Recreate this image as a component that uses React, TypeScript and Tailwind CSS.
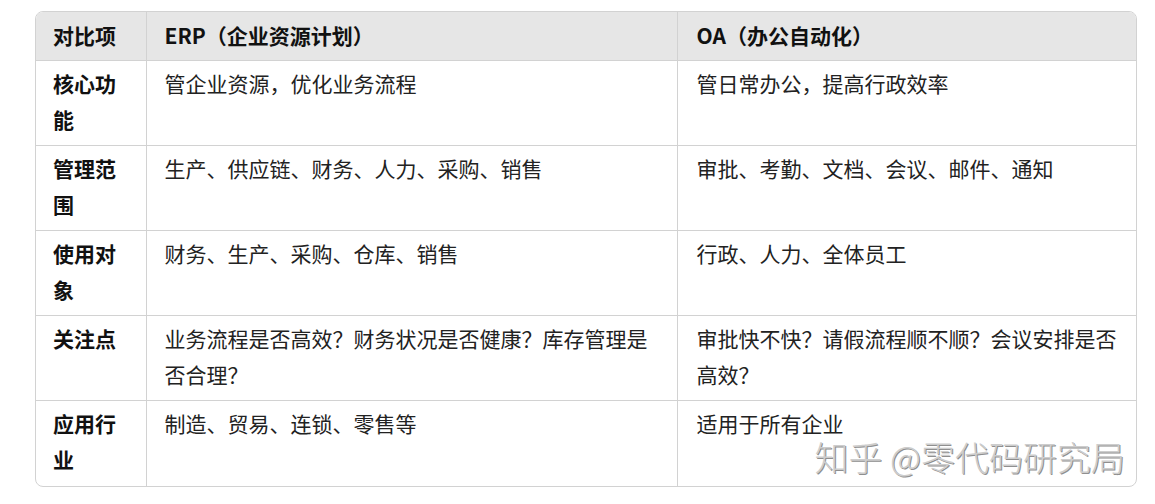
const rows: [string, string, string][] = [
  ["核心功能", "管企业资源，优化业务流程", "管日常办公，提高行政效率"],
  ["管理范围", "生产、供应链、财务、人力、采购、销售", "审批、考勤、文档、会议、邮件、通知"],
  ["使用对象", "财务、生产、采购、仓库、销售", "行政、人力、全体员工"],
  ["关注点", "业务流程是否高效？财务状况是否健康？库存管理是否合理？", "审批快不快？请假流程顺不顺？会议安排是否高效？"],
  ["应用行业", "制造、贸易、连锁、零售等", "适用于所有企业"],
];

export default function App() {
  return (
    <div
      className="min-h-screen bg-white pl-[35px] pt-[11px] text-[21px] leading-[36px] text-[#222]"
      style={{ fontFamily: '"Microsoft YaHei", "Noto Sans CJK SC", "Noto Sans", sans-serif' }}
    >
      <div className="relative w-[1102px] overflow-hidden rounded-[8px] border border-[#d2d2d2]">
        <table className="w-full table-fixed border-collapse">
          <colgroup>
            <col className="w-[110px]" />
            <col className="w-[531px]" />
            <col />
          </colgroup>
          <thead>
            <tr className="h-[48px] bg-[#e6e6e6] text-[#111]">
              <th className="px-[17px] pb-[7px] pt-[5px] text-left font-bold">对比项</th>
              <th className="border-l border-[#d2d2d2] px-[18px] pb-[7px] pt-[5px] text-left font-bold">ERP（企业资源计划）</th>
              <th className="border-l border-[#d2d2d2] pl-[19px] pr-[6px] pb-[7px] pt-[5px] text-left font-bold">OA（办公自动化）</th>
            </tr>
          </thead>
          <tbody>
            {rows.map((r) => (
              <tr key={r[0]} className="h-[85px] border-t border-[#d2d2d2] align-top">
                <td className="px-[17px] pb-[6px] pt-[4px] font-bold text-[#111]">{r[0]}</td>
                <td className="border-l border-[#d2d2d2] px-[18px] pb-[6px] pt-[4px]">{r[1]}</td>
                <td className="border-l border-[#d2d2d2] pl-[19px] pr-[6px] pb-[6px] pt-[4px]">{r[2]}</td>
              </tr>
            ))}
          </tbody>
        </table>
        <div className="pointer-events-none absolute bottom-[9px] right-[11px] text-[34px] font-light leading-[40px] text-[#cdcdcd] [text-shadow:1px_1px_0_#8f8f8f]">
          知乎 @零代码研究局
        </div>
      </div>
    </div>
  );
}
